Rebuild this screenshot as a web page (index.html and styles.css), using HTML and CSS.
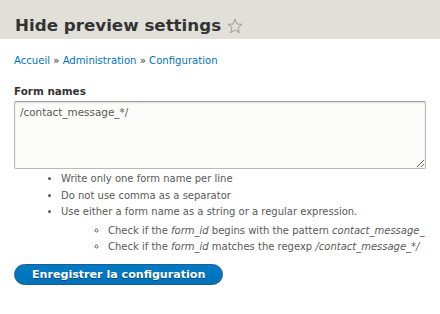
FILE: index.html
```html
<!DOCTYPE html>
<html>
<head>
<meta charset="utf-8">
<link rel="stylesheet" href="styles.css">
</head>
<body>
<header class="page-header">
  <h1 class="page-title">Hide preview settings</h1>
  <svg class="star" width="16" height="16" viewBox="0 0 16 16"><path d="M8 1.2 L9.9 6 L15 6.3 L11 9.6 L12.3 14.7 L8 11.9 L3.7 14.7 L5 9.6 L1 6.3 L6.1 6 Z" fill="none" stroke="#9a9a90" stroke-width="1" stroke-linejoin="round"/></svg>
</header>
<main class="content">
  <nav class="breadcrumb"><a href="#">Accueil</a> » <a href="#">Administration</a> » <a href="#">Configuration</a></nav>
  <form class="form">
    <label class="label">Form names</label>
    <textarea class="textarea">/contact_message_*/</textarea>
    <ul class="help">
      <li>Write only one form name per line</li>
      <li>Do not use comma as a separator</li>
      <li>Use either a form name as a string or a regular expression.
        <ul class="sub">
          <li>Check if the <em>form_id</em> begins with the pattern <em>contact_message_</em></li>
          <li>Check if the <em>form_id</em> matches the regexp <em>/contact_message_*/</em></li>
        </ul>
      </li>
    </ul>
    <button type="button" class="button">Enregistrer la configuration</button>
  </form>
</main>
</body>
</html>
```
FILE: styles.css
```css
html, body {
  margin: 0;
  padding: 0;
  background: #fff;
  font-family: "DejaVu Sans", sans-serif;
  color: #333;
}
.page-header {
  background: #e0e0d8;
  height: 39px;
  display: flex;
  align-items: flex-start;
  padding: 15px 14px 0 15px;
  box-sizing: border-box;
}
.page-title {
  margin: 0;
  font-size: 16.7px;
  line-height: 20px;
  font-weight: bold;
  color: #333;
}
.star {
  margin-left: 6px;
  margin-top: 3px;
}
.content {
  padding: 15px 14px 0;
}
.breadcrumb {
  font-size: 10.1px;
  line-height: 14px;
  color: #333;
}
.breadcrumb a {
  color: #0074bd;
  text-decoration: none;
}
.form {
  margin-top: 16px;
}
.label {
  display: block;
  font-size: 10.4px;
  line-height: 14px;
  font-weight: bold;
  margin-bottom: 3px;
}
.textarea {
  display: block;
  width: 412px;
  height: 68px;
  box-sizing: border-box;
  border: 1px solid #b8b8b8;
  border-top-color: #999;
  border-radius: 2px;
  background: #fcfcfa;
  font-family: "DejaVu Sans", sans-serif;
  font-size: 10.4px;
  color: #595959;
  padding: 4px 5px;
  resize: vertical;
  box-shadow: inset 0 1px 2px rgba(0,0,0,0.12);
  margin: 0;
}
.help {
  margin: 2px 0 0;
  padding-left: 47px;
  font-size: 10px;
  color: #595959;
  line-height: 16.5px;
}
.help li {
  margin: 0;
}
.help .sub {
  padding-left: 47px;
  margin: 2px 0 0;
}
.button {
  margin-top: 8px;
  height: 21px;
  padding: 0 17px;
  border: 1px solid #1e5c90;
  border-radius: 20px;
  background: linear-gradient(#007bc6, #0071b8);
  color: #fff;
  font-family: "DejaVu Sans", sans-serif;
  font-size: 11.1px;
  font-weight: bold;
  text-shadow: 0 1px rgba(0,0,0,0.4);
}
```
